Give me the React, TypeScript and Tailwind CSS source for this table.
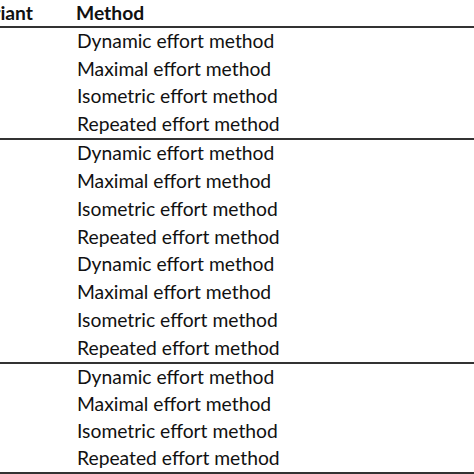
const groups: { rows: string[]; rowClass: string }[] = [
  {
    rows: ["Dynamic effort method", "Maximal effort method", "Isometric effort method", "Repeated effort method"],
    rowClass: "h-[27.5px]",
  },
  {
    rows: [
      "Dynamic effort method",
      "Maximal effort method",
      "Isometric effort method",
      "Repeated effort method",
      "Dynamic effort method",
      "Maximal effort method",
      "Isometric effort method",
      "Repeated effort method",
    ],
    rowClass: "h-[27.75px]",
  },
  {
    rows: ["Dynamic effort method", "Maximal effort method", "Isometric effort method", "Repeated effort method"],
    rowClass: "h-[27px]",
  },
];

export default function App() {
  return (
    <div
      className="w-[474px] h-[474px] overflow-hidden bg-white text-[#111] text-[19.3px]"
      style={{ fontFamily: "Lato, 'Open Sans', sans-serif" }}
    >
      <div className="flex h-[28px] items-center border-b-2 border-[#333] font-bold">
        <div className="w-[76px] shrink-0 flex justify-end pr-[43px]">
          <span className="whitespace-nowrap">Variant</span>
        </div>
        <div>Method</div>
      </div>
      {groups.map((g, gi) => (
        <div key={gi} className="border-b-2 border-[#333]">
          {g.rows.map((r, i) => (
            <div key={i} className={`flex items-center ${g.rowClass}`}>
              <div className="w-[77px] shrink-0" />
              <div className="whitespace-nowrap">{r}</div>
            </div>
          ))}
        </div>
      ))}
    </div>
  );
}
